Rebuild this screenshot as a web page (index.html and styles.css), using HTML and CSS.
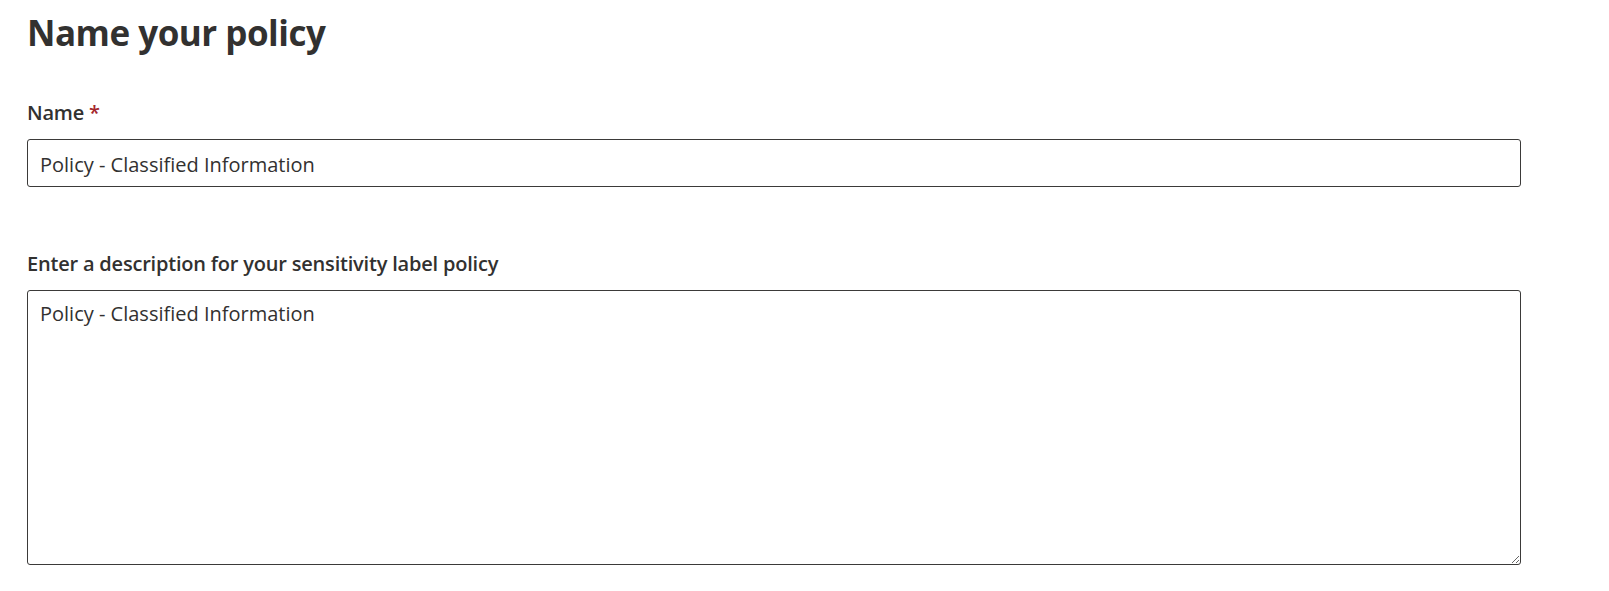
FILE: index.html
```html
<!DOCTYPE html>
<html lang="en">
<head>
<meta charset="utf-8">
<title>Name your policy</title>
<link rel="stylesheet" href="styles.css">
</head>
<body>
<main class="page">
  <h1 class="title">Name your policy</h1>
  <div class="field">
    <label class="label" for="name">Name <span class="req">*</span></label>
    <input id="name" class="input" type="text" value="Policy - Classified Information">
  </div>
  <div class="field field-desc">
    <label class="label" for="desc">Enter a description for your sensitivity label policy</label>
    <textarea id="desc" class="textarea">Policy - Classified Information</textarea>
  </div>
</main>
</body>
</html>
```
FILE: styles.css
```css
html, body {
  margin: 0;
  padding: 0;
  background: #ffffff;
}
body {
  font-family: "Open Sans", "Noto Sans", "Liberation Sans", sans-serif;
  color: #323130;
}
.page {
  padding: 9px 0 0 27px;
  width: 1494px;
}
.title {
  margin: 0;
  font-size: 35px;
  font-weight: 700;
  line-height: 48px;
  letter-spacing: -0.5px;
  color: #323130;
}
.field {
  display: flex;
  flex-direction: column;
  margin-top: 42px;
}
.field-desc {
  margin-top: 63px;
}
.label {
  font-size: 20px;
  font-weight: 600;
  line-height: 28px;
  letter-spacing: -0.2px;
  margin-bottom: 12px;
}
.req {
  color: #a4262c;
}
.input, .textarea {
  box-sizing: border-box;
  width: 1494px;
  border: 1px solid #3b3a39;
  border-radius: 3px;
  font-family: inherit;
  font-size: 20px;
  color: #323130;
  padding: 0 12px;
  outline: none;
  background: #fff;
  margin: 0;
}
.input {
  height: 48px;
  padding-top: 3px;
}
.textarea {
  display: block;
  height: 275px;
  padding-top: 8px;
  resize: vertical;
  line-height: 30px;
}
```
